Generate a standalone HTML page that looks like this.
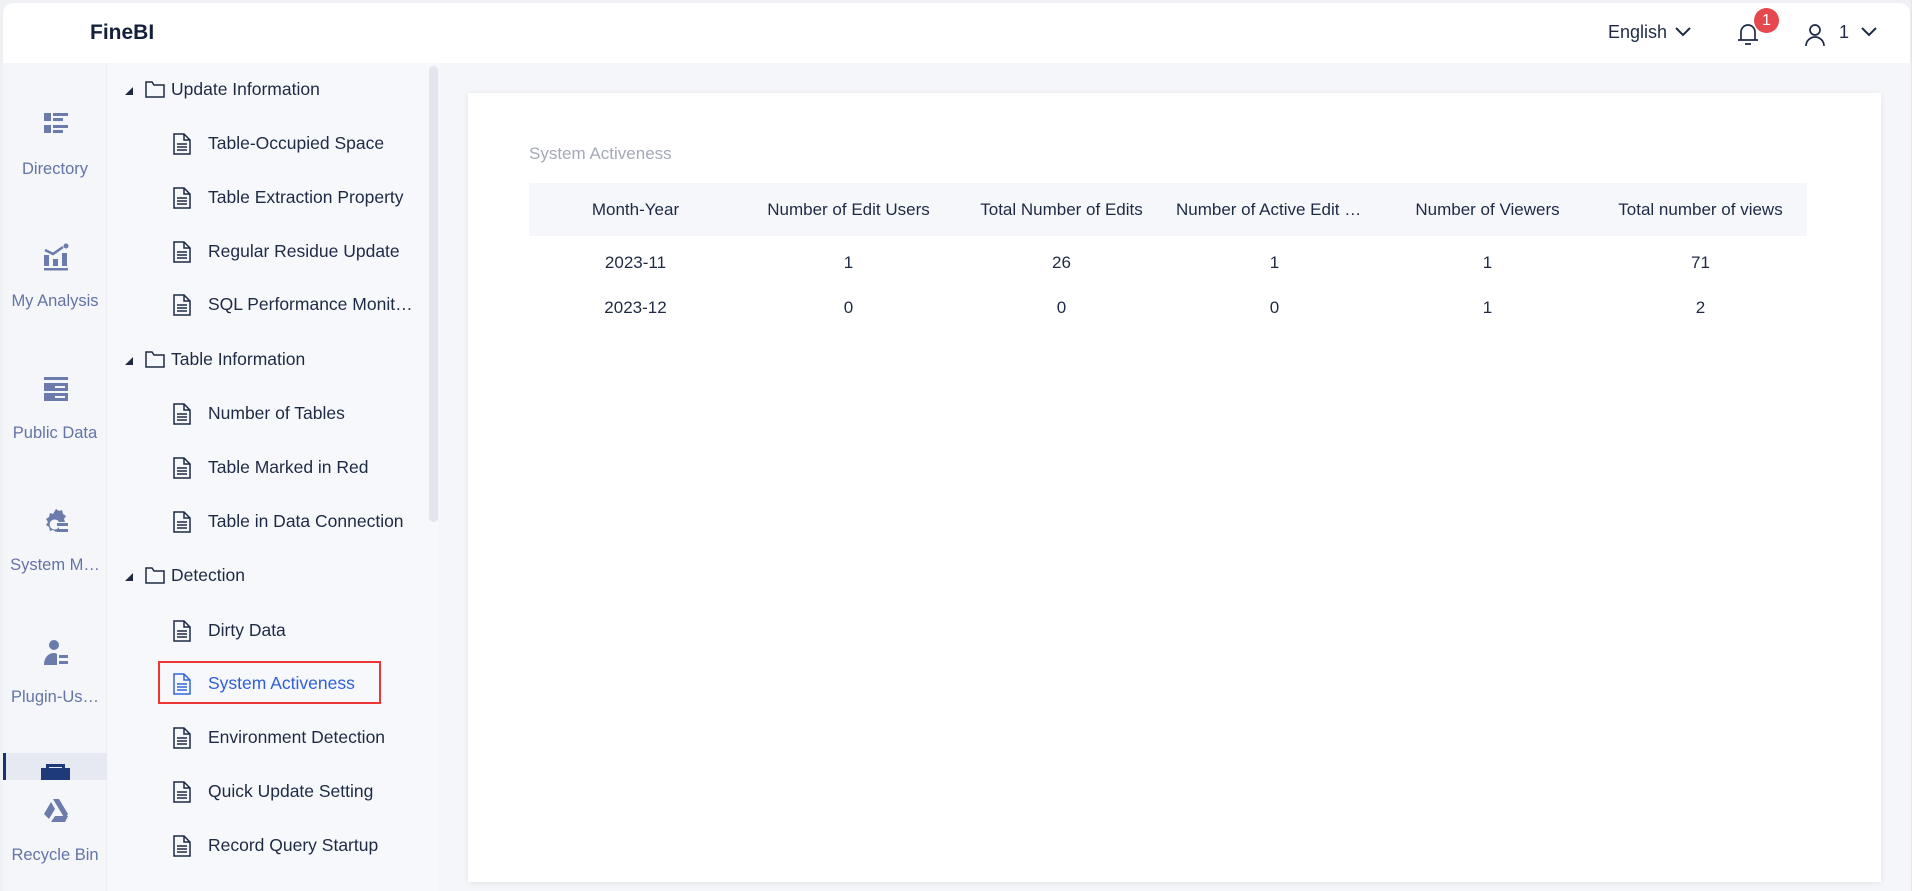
<!DOCTYPE html>
<html><head><meta charset="utf-8"><style>
*{box-sizing:border-box;margin:0;padding:0}
body{width:1917px;height:891px;overflow:hidden;background:#fff;font-family:"Liberation Sans",Arial,sans-serif;position:relative}
#frame{position:absolute;left:0;top:0;width:1912px;height:891px;background:#f0f1f4;border-right:1px solid #e4e6ea}
#header{position:absolute;left:3px;top:3px;width:1907px;height:60px;background:#fff;border-radius:10px 10px 0 0;box-shadow:0 2px 4px rgba(0,0,0,.04)}
.logo{position:absolute;left:87px;top:18px;font-size:21px;font-weight:bold;color:#14203a}
#main{position:absolute;left:3px;top:63px;width:1908px;height:828px;background:#f5f6fa}
#nav{position:absolute;left:0;top:0;width:104px;height:828px;background:#f5f6fa;border-right:1px solid #eceef3}
.ni{position:absolute;left:0;width:104px;text-align:center;color:#6474a6;font-size:16.5px;white-space:nowrap}
.ic{position:absolute;left:38px;width:30px;height:30px}
#tree{position:absolute;left:105px;top:0;width:330px;height:828px;background:#f7f8fc}
.f{position:absolute;left:17px;font-size:17.5px;color:#1e2a44;white-space:nowrap}
.f .tri{position:absolute;left:0;top:-2px;width:0;height:0;border-left:8px solid transparent;border-bottom:8px solid #1e2a44}
.f svg{position:absolute;left:20px;top:-8px}
.f span{position:absolute;left:46px;top:-10px}
.c{position:absolute;left:64px;font-size:17.5px;color:#1e2a44;white-space:nowrap}
.c svg{position:absolute;left:0;top:-10px}
.c span{position:absolute;left:36px;top:-10px}
#card{position:absolute;left:465px;top:30px;width:1413px;height:789px;background:#fff;box-shadow:0 1px 6px rgba(0,0,0,.08)}
.title{position:absolute;left:61px;top:51px;font-size:17px;color:#a3a9b6}
table{position:absolute;left:61px;top:90px;width:1278px;border-collapse:collapse;table-layout:fixed}
th{background:#f6f7fb;height:53px;font-weight:normal;font-size:17px;color:#1e2a44;white-space:nowrap;overflow:hidden;text-overflow:ellipsis;padding:0 8px}
td{height:45px;text-align:center;font-size:17px;color:#1e2a44}
tr.r1 td{padding-top:8px}
tr.r2 td{height:53px}
</style></head><body>
<div id="frame">
<div id="header">
<div class="logo">FineBI</div>
<div style="position:absolute;left:1605px;top:19px;font-size:18px;color:#1e2a44">English</div>
<svg style="position:absolute;left:1671px;top:23px" width="18" height="12"><path d="M2 2l7 7 7-7" stroke="#1e2a44" stroke-width="2" fill="none"/></svg>
<svg style="position:absolute;left:1733px;top:18px" width="24" height="26"><path d="M5 19V11a7 7 0 0 1 14 0v8M2 19h20M9 23h6" stroke="#1e2a44" stroke-width="1.7" fill="none"/></svg>
<div style="position:absolute;left:1751px;top:5px;width:25px;height:25px;border-radius:50%;background:#e5484d;color:#fff;font-size:16px;text-align:center;line-height:25px">1</div>
<svg style="position:absolute;left:1801px;top:20px" width="22" height="24"><circle cx="11" cy="7" r="5" stroke="#1e2a44" stroke-width="1.7" fill="none"/><path d="M2 23a9 9 0 0 1 18 0" stroke="#1e2a44" stroke-width="1.7" fill="none"/></svg>
<div style="position:absolute;left:1836px;top:19px;font-size:18px;color:#1e2a44">1</div>
<svg style="position:absolute;left:1857px;top:23px" width="18" height="12"><path d="M2 2l7 7 7-7" stroke="#1e2a44" stroke-width="2" fill="none"/></svg>
</div>
<div id="main">
<div id="nav">
<svg class="ic" style="top:46px" viewBox="0 0 30 30"><rect x="3" y="4" width="7" height="8" fill="#6b7bab"/><rect x="12" y="4" width="15" height="3" fill="#6b7bab"/><rect x="12" y="9" width="10" height="3" fill="#6b7bab"/><rect x="3" y="16" width="7" height="8" fill="#6b7bab"/><rect x="12" y="16" width="15" height="3" fill="#6b7bab"/><rect x="12" y="21" width="10" height="3" fill="#6b7bab"/></svg>
<div class="ni" style="top:97px">Directory</div>
<svg class="ic" style="top:179px" viewBox="0 0 30 30"><rect x="3" y="13" width="5" height="11" fill="#6b7bab"/><rect x="12" y="17" width="5" height="7" fill="#6b7bab"/><rect x="21" y="11" width="5" height="13" fill="#6b7bab"/><rect x="3" y="26" width="24" height="2.5" fill="#6b7bab"/><path d="M4 8l8 4 10-7" stroke="#6b7bab" stroke-width="2.5" fill="none"/><circle cx="25" cy="4" r="2.5" fill="#6b7bab"/></svg>
<div class="ni" style="top:229px">My Analysis</div>
<svg class="ic" style="top:311px" viewBox="0 0 30 30"><rect x="3" y="3" width="24" height="3" fill="#6b7bab"/><rect x="3" y="9" width="24" height="8" fill="#6b7bab"/><rect x="3" y="19" width="24" height="8" fill="#6b7bab"/><rect x="14" y="12" width="10" height="2" fill="#f5f6fa"/><rect x="14" y="22" width="10" height="2" fill="#f5f6fa"/></svg>
<div class="ni" style="top:361px">Public Data</div>
<svg class="ic" style="top:443px" viewBox="0 0 30 30"><path d="M15 3l3 2 3-1 1 4 3 2-2 3 1 3h-6a5 5 0 1 0 0 5v3l-3 2-3-2-3 1-1-4-3-2 2-3-2-3 3-2 1-4 3 1z" fill="#6b7bab"/><rect x="16" y="17" width="11" height="3" fill="#6b7bab"/><rect x="16" y="23" width="11" height="3" fill="#6b7bab"/></svg>
<div class="ni" style="top:493px">System M…</div>
<svg class="ic" style="top:575px" viewBox="0 0 30 30"><circle cx="13" cy="7" r="5" fill="#6b7bab"/><path d="M3 27c0-7 4-12 10-12 2 0 3 1 3 1v11z" fill="#6b7bab"/><rect x="18" y="17" width="9" height="3" fill="#6b7bab"/><rect x="18" y="23" width="9" height="3" fill="#6b7bab"/></svg>
<div class="ni" style="top:625px">Plugin-Us…</div>
<div style="position:absolute;left:0;top:690px;width:104px;height:27px;background:#e6e9f2"></div>
<div style="position:absolute;left:0;top:690px;width:3px;height:27px;background:#1f2f6b"></div>
<div style="position:absolute;left:38px;top:705px;width:29px;height:12px;background:#1f3a7a"></div>
<div style="position:absolute;left:43px;top:701px;width:19px;height:6px;border:3px solid #1f3a7a;border-bottom:none"></div>
<svg class="ic" style="top:733px" viewBox="0 0 30 30"><path d="M12 3h6l9 15-3 5z" fill="#6b7bab"/><path d="M10 6l4 7-6 10-5-5z" fill="#6b7bab"/><path d="M10 26l4-6h13l-3 6z" fill="#6b7bab"/></svg>
<div class="ni" style="top:783px">Recycle Bin</div>
</div>
<div id="tree">
<div style="position:absolute;left:321px;top:3px;width:9px;height:456px;border-radius:5px;background:#e3e6ee"></div>
<div class="f" style="top:26px"><i class="tri"></i><svg width="20" height="17"><path d="M1 1h6l2 3h10v12H1z" stroke="#1e2a44" stroke-width="1.5" fill="none"/></svg><span>Update Information</span></div>
<div class="c" style="top:80px"><svg width="20" height="22"><path d="M2 1h10l6 6v14H2zM12 1v6h6M5 11h10M5 14h10M5 17h10" stroke="#1e2a44" stroke-width="1.5" fill="none"/></svg><span>Table-Occupied Space</span></div>
<div class="c" style="top:134px"><svg width="20" height="22"><path d="M2 1h10l6 6v14H2zM12 1v6h6M5 11h10M5 14h10M5 17h10" stroke="#1e2a44" stroke-width="1.5" fill="none"/></svg><span>Table Extraction Property</span></div>
<div class="c" style="top:188px"><svg width="20" height="22"><path d="M2 1h10l6 6v14H2zM12 1v6h6M5 11h10M5 14h10M5 17h10" stroke="#1e2a44" stroke-width="1.5" fill="none"/></svg><span>Regular Residue Update</span></div>
<div class="c" style="top:241px"><svg width="20" height="22"><path d="M2 1h10l6 6v14H2zM12 1v6h6M5 11h10M5 14h10M5 17h10" stroke="#1e2a44" stroke-width="1.5" fill="none"/></svg><span>SQL Performance Monit…</span></div>
<div class="f" style="top:296px"><i class="tri"></i><svg width="20" height="17"><path d="M1 1h6l2 3h10v12H1z" stroke="#1e2a44" stroke-width="1.5" fill="none"/></svg><span>Table Information</span></div>
<div class="c" style="top:350px"><svg width="20" height="22"><path d="M2 1h10l6 6v14H2zM12 1v6h6M5 11h10M5 14h10M5 17h10" stroke="#1e2a44" stroke-width="1.5" fill="none"/></svg><span>Number of Tables</span></div>
<div class="c" style="top:404px"><svg width="20" height="22"><path d="M2 1h10l6 6v14H2zM12 1v6h6M5 11h10M5 14h10M5 17h10" stroke="#1e2a44" stroke-width="1.5" fill="none"/></svg><span>Table Marked in Red</span></div>
<div class="c" style="top:458px"><svg width="20" height="22"><path d="M2 1h10l6 6v14H2zM12 1v6h6M5 11h10M5 14h10M5 17h10" stroke="#1e2a44" stroke-width="1.5" fill="none"/></svg><span>Table in Data Connection</span></div>
<div class="f" style="top:512px"><i class="tri"></i><svg width="20" height="17"><path d="M1 1h6l2 3h10v12H1z" stroke="#1e2a44" stroke-width="1.5" fill="none"/></svg><span>Detection</span></div>
<div class="c" style="top:567px"><svg width="20" height="22"><path d="M2 1h10l6 6v14H2zM12 1v6h6M5 11h10M5 14h10M5 17h10" stroke="#1e2a44" stroke-width="1.5" fill="none"/></svg><span>Dirty Data</span></div>
<div style="position:absolute;left:50px;top:598px;width:223px;height:43px;border:2px solid #ee3535"></div>
<div class="c" style="top:620px;color:#2f5fd8"><svg width="20" height="22"><path d="M2 1h10l6 6v14H2zM12 1v6h6M5 11h10M5 14h10M5 17h10" stroke="#3366dd" stroke-width="1.5" fill="none"/></svg><span>System Activeness</span></div>
<div class="c" style="top:674px"><svg width="20" height="22"><path d="M2 1h10l6 6v14H2zM12 1v6h6M5 11h10M5 14h10M5 17h10" stroke="#1e2a44" stroke-width="1.5" fill="none"/></svg><span>Environment Detection</span></div>
<div class="c" style="top:728px"><svg width="20" height="22"><path d="M2 1h10l6 6v14H2zM12 1v6h6M5 11h10M5 14h10M5 17h10" stroke="#1e2a44" stroke-width="1.5" fill="none"/></svg><span>Quick Update Setting</span></div>
<div class="c" style="top:782px"><svg width="20" height="22"><path d="M2 1h10l6 6v14H2zM12 1v6h6M5 11h10M5 14h10M5 17h10" stroke="#1e2a44" stroke-width="1.5" fill="none"/></svg><span>Record Query Startup</span></div>
</div>
<div id="card">
<div class="title">System Activeness</div>
<table>
<tr><th>Month-Year</th><th>Number of Edit Users</th><th>Total Number of Edits</th><th>Number of Active Edit Users</th><th>Number of Viewers</th><th>Total number of views</th></tr>
<tr class="r1"><td>2023-11</td><td>1</td><td>26</td><td>1</td><td>1</td><td>71</td></tr>
<tr class="r2"><td>2023-12</td><td>0</td><td>0</td><td>0</td><td>1</td><td>2</td></tr>
</table>
</div>
</div>
</div>
</body></html>
